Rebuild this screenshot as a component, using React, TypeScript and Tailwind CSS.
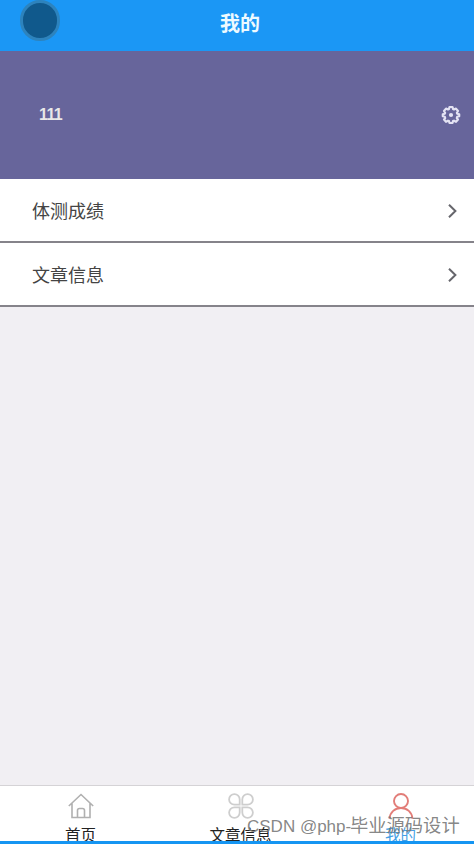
import React from "react";

const Chevron = () => (
  <svg className="mr-[16px] mt-[2px] h-[16px] w-[11px]" viewBox="0 0 11 16" fill="none" stroke="#66666c" strokeWidth="2">
    <path d="M2 1.7 L8.4 8 L2 14.3" />
  </svg>
);

const Row = ({ label }: { label: string }) => (
  <div className="flex h-16 items-center justify-between border-b-2 border-[#85838a] bg-white pl-8">
    <span className="mt-[4px] text-[18px] leading-6 text-[#444]">{label}</span>
    <Chevron />
  </div>
);

const HomeIcon = () => (
  <svg className="h-[26px] w-[26px] shrink-0" viewBox="0 0 26 26" fill="none" stroke="#b0b0b0" strokeWidth="1.6">
    <path d="M0.8 13 L13 1.5 L25.2 13 M4 10.5 V24.5 H22 V10.5 M9.5 24.5 V17.5 Q9.5 15.5 11.5 15.5 H14.5 Q16.5 15.5 16.5 17.5 V24.5" />
  </svg>
);

const CloverIcon = () => (
  <svg className="h-[26px] w-[26px] shrink-0" viewBox="0 0 26 26" fill="none" stroke="#cecece" strokeWidth="1.8">
    <path d="M11.7 11.7 H6.4 A5.3 5.3 0 1 1 11.7 6.4 Z M14.3 11.7 V6.4 A5.3 5.3 0 1 1 19.6 11.7 Z M11.7 14.3 V19.6 A5.3 5.3 0 1 1 6.4 14.3 Z M14.3 14.3 H19.6 A5.3 5.3 0 1 1 14.3 19.6 Z" />
  </svg>
);

const UserIcon = () => (
  <svg className="h-[26px] w-[26px] shrink-0" viewBox="0 0 26 26" fill="none" stroke="#e27d78" strokeWidth="1.9">
    <circle cx="13" cy="8" r="7" />
    <path d="M1.5 25.7 C2 19 7 15 13 15 S24 19 24.5 25.7" />
  </svg>
);

const Gear = () => (
  <svg className="mr-[13px] h-[20px] w-[20px]" viewBox="0 0 20 20" fill="none" stroke="#e4e3f3" strokeWidth="2.2" strokeLinejoin="round">
    <path d="M8 4 L8.5 2 H11.5 L12 4 L13 4.5 L15 3.6 L17 6 L15.9 7.8 L16.2 8.7 L18.2 9.2 V11.2 L16.2 11.7 L15.8 13 L17 14.6 L15 16.8 L13 15.7 L12 16.1 L11.5 18 H8.5 L8 16.1 L7 15.7 L5 16.8 L3 14.6 L4.2 13 L3.8 11.7 L1.8 11.2 V9.2 L3.8 8.7 L4.1 7.8 L3 6 L5 3.6 L7 4.5 Z" />
    <circle cx="10" cy="10" r="2.1" fill="#e4e3f3" stroke="none" />
  </svg>
);

const Tab = ({ label, icon, active }: { label: string; icon: React.ReactNode; active?: boolean }) => (
  <div className="flex w-[160px] shrink-0 flex-col items-center pt-[7px] pl-[1px]">
    {icon}
    <span className={"mt-[7px] shrink-0 text-[15.5px] leading-[20px] " + (active ? "text-[#459fe4]" : "text-[#222]")}>{label}</span>
  </div>
);

export default function App() {
  return (
    <div className="relative flex h-[844px] w-[474px] flex-col overflow-hidden bg-[#f1eff3] font-['Liberation_Sans','Noto_Sans_CJK_SC',sans-serif]">
      <header className="flex h-[51px] shrink-0 justify-center bg-[#1b97f5] pt-[10px]">
        <h1 className="ml-[6px] text-[20px] font-bold leading-[28px] text-[#eefaff]">我的</h1>
      </header>
      <div className="absolute left-[20px] top-0 h-[41px] w-[40px] rounded-full border-[3px] border-[#2d83bd] bg-[#10598c]" />
      <section className="flex h-32 shrink-0 items-center justify-between bg-[#67659b] pl-[39px]">
        <span className="font-['Liberation_Sans',sans-serif] text-[16px] font-bold text-[#e9e8e8]">
          <span className="tracking-[-0.6px]">111</span>
        </span>
        <Gear />
      </section>
      <Row label="体测成绩" />
      <Row label="文章信息" />
      <main className="flex-1" />
      <footer className="flex h-[59px] shrink-0 overflow-hidden border-t border-[#d5d3d6] bg-white">
        <Tab label="首页" icon={<HomeIcon />} />
        <Tab label="文章信息" icon={<CloverIcon />} />
        <Tab label="我的" icon={<UserIcon />} active />
      </footer>
      <div className="absolute bottom-0 left-0 h-[3px] w-full bg-[#1595f2]" />
      <div className="absolute left-[247px] top-[813px] whitespace-nowrap text-[18.3px] leading-[26px] text-[#777]/90">
        <span className="inline-block w-[103px] font-['Liberation_Sans',sans-serif] text-[17px]">CSDN @php-</span>毕业源码设计
      </div>
    </div>
  );
}
